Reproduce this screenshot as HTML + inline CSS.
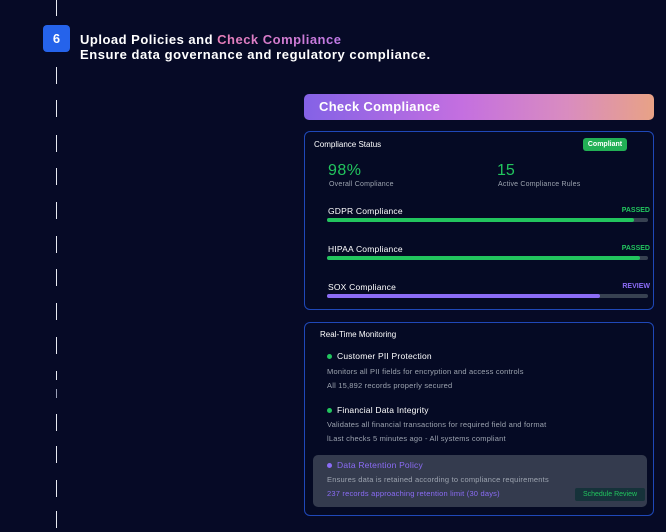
<!DOCTYPE html>
<html><head><meta charset="utf-8"><style>
*{margin:0;padding:0;box-sizing:border-box}
body{width:666px;height:532px;background:#060a26;font-family:"Liberation Sans",sans-serif;position:relative;overflow:hidden;color:#fff}
.d{position:absolute;left:56px;width:1px;background:#e8eaf2}
.a{position:absolute;white-space:nowrap}
.num{position:absolute;left:43px;top:25px;width:27px;height:27px;background:#2563eb;border-radius:4px;font-weight:bold;font-size:13px;text-align:center;line-height:27px}
.btn{position:absolute;left:304px;top:94px;width:350px;height:26px;border-radius:5px;background:linear-gradient(90deg,#8462e6,#c46fe0 45%,#d98cc0 75%,#e8a286);font-weight:bold;font-size:13px;padding-left:15px;line-height:26px;letter-spacing:0.3px}
.card{position:absolute;left:304px;width:350px;border:1px solid #1f48b8;border-radius:6px;background:#050a24}
.bar{position:absolute;left:327px;width:321px;height:4px;background:#374151;border-radius:2px}
.bar i{display:block;height:4px;border-radius:2px}
.s{font-size:8px;color:#9ca3af;letter-spacing:0.2px}
.t{font-size:8.5px;color:#fff;letter-spacing:0.2px}
.g{font-size:7px;font-weight:bold;color:#22c55e;right:16px}
.dot{position:absolute;width:5px;height:5px;border-radius:50%}
</style></head><body>
<div class="d" style="top:0;height:16px"></div>
<div class="d" style="top:67px;height:17px"></div>
<div class="d" style="top:100px;height:17px"></div>
<div class="d" style="top:135px;height:17px"></div>
<div class="d" style="top:168px;height:17px"></div>
<div class="d" style="top:202px;height:17px"></div>
<div class="d" style="top:236px;height:17px"></div>
<div class="d" style="top:269px;height:17px"></div>
<div class="d" style="top:303px;height:17px"></div>
<div class="d" style="top:337px;height:17px"></div>
<div class="d" style="top:371px;height:9px"></div>
<div class="d" style="top:389px;height:9px;background:#9aa0b8"></div>
<div class="d" style="top:414px;height:17px"></div>
<div class="d" style="top:446px;height:17px"></div>
<div class="d" style="top:480px;height:17px"></div>
<div class="d" style="top:511px;height:17px"></div>

<div class="num">6</div>
<div class="a" style="left:80px;top:32px;font-size:13px;font-weight:bold;letter-spacing:0.5px">Upload Policies and <span style="background:linear-gradient(90deg,#e97fb8,#c07ae8);-webkit-background-clip:text;color:transparent">Check Compliance</span></div>
<div class="a" style="left:80px;top:47px;font-size:13px;font-weight:bold;letter-spacing:0.55px">Ensure data governance and regulatory compliance.</div>

<div class="btn">Check Compliance</div>

<div class="card" style="top:131px;height:179px"></div>
<div class="a" style="left:314px;top:140px;font-size:8px">Compliance Status</div>
<div class="a" style="left:583px;top:138px;width:44px;height:13px;background:#22b055;border-radius:3px;font-size:7px;font-weight:bold;text-align:center;line-height:13px">Compliant</div>
<div class="a" style="left:328px;top:162px;font-size:16px;color:#22c55e;letter-spacing:0.5px">98%</div>
<div class="a s" style="left:329px;top:181px;font-size:7px">Overall Compliance</div>
<div class="a" style="left:497px;top:162px;font-size:16px;color:#22c55e">15</div>
<div class="a s" style="left:498px;top:181px;font-size:7px">Active Compliance Rules</div>

<div class="a t" style="left:328px;top:206px">GDPR Compliance</div>
<div class="a g" style="top:207px">PASSED</div>
<div class="bar" style="top:218px"><i style="width:307px;background:#22c55e"></i></div>
<div class="a t" style="left:328px;top:244px">HIPAA Compliance</div>
<div class="a g" style="top:245px">PASSED</div>
<div class="bar" style="top:256px"><i style="width:313px;background:#22c55e"></i></div>
<div class="a t" style="left:328px;top:282px">SOX Compliance</div>
<div class="a g" style="top:283px;color:#8b6cf6">REVIEW</div>
<div class="bar" style="top:294px"><i style="width:273px;background:#8b6cf6"></i></div>

<div class="card" style="top:322px;height:194px"></div>
<div class="a" style="left:320px;top:330px;font-size:8px">Real-Time Monitoring</div>
<div class="dot" style="left:327px;top:354px;background:#22c55e"></div>
<div class="a" style="left:337px;top:351px;font-size:8.5px;letter-spacing:0.2px">Customer PII Protection</div>
<div class="a s" style="left:327px;top:367px;font-size:7.5px">Monitors all PII fields for encryption and access controls</div>
<div class="a s" style="left:327px;top:381px;font-size:7.5px">All 15,892 records properly secured</div>
<div class="dot" style="left:327px;top:408px;background:#22c55e"></div>
<div class="a" style="left:337px;top:405px;font-size:8.5px;letter-spacing:0.2px">Financial Data Integrity</div>
<div class="a s" style="left:327px;top:420px;font-size:7.5px">Validates all financial transactions for required field and format</div>
<div class="a s" style="left:327px;top:434px;font-size:7.5px">lLast checks 5 minutes ago - All systems compliant</div>

<div class="a" style="left:313px;top:455px;width:334px;height:52px;background:#343b4e;border-radius:5px"></div>
<div class="dot" style="left:327px;top:463px;background:#8b6cf6"></div>
<div class="a" style="left:337px;top:460px;font-size:8.5px;color:#8b6cf6;letter-spacing:0.2px">Data Retention Policy</div>
<div class="a s" style="left:327px;top:475px;font-size:7.5px">Ensures data is retained according to compliance requirements</div>
<div class="a" style="left:327px;top:489px;font-size:7.5px;color:#8b6cf6;letter-spacing:0.2px">237 records approaching retention limit (30 days)</div>
<div class="a" style="left:575px;top:488px;width:70px;height:13px;background:#16323a;border-radius:2px;font-size:7px;color:#22c55e;text-align:center;line-height:13px">Schedule Review</div>
</body></html>
